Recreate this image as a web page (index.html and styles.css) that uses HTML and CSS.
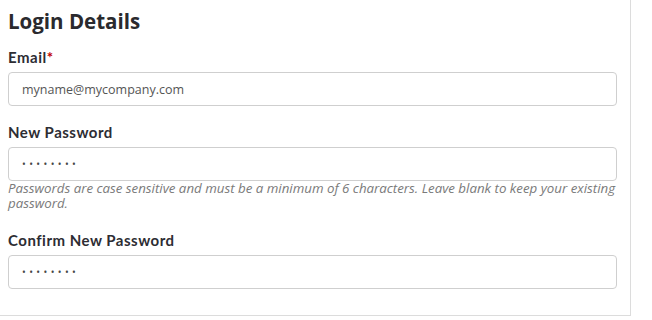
FILE: index.html
```html
<!DOCTYPE html>
<html>
<head>
<meta charset="utf-8">
<link rel="stylesheet" href="styles.css">
</head>
<body>
<div class="panel">
  <h2 class="title">Login Details</h2>
  <div class="field">
    <label class="label" for="email">Email<span class="req">*</span></label>
    <input class="input" id="email" type="text" value="myname@mycompany.com">
  </div>
  <div class="field">
    <label class="label" for="pw">New Password</label>
    <input class="input pw" id="pw" type="password" value="abcdefgh">
    <p class="help">Passwords are case sensitive and must be a minimum of 6 characters. Leave blank to keep your existing password.</p>
  </div>
  <div class="field">
    <label class="label" for="pw2">Confirm New Password</label>
    <input class="input pw" id="pw2" type="password" value="abcdefgh">
  </div>
</div>
</body>
</html>
```
FILE: styles.css
```css
html, body {
  margin: 0;
  padding: 0;
  background: #fff;
}
.panel {
  box-sizing: border-box;
  width: 631px;
  height: 316px;
  padding: 6px 13px 0 8px;
  border-right: 1px solid #dcdcdc;
  border-bottom: 1px solid #dcdcdc;
  display: flex;
  flex-direction: column;
}
.title {
  margin: 0 0 11px 0;
  font-family: "Open Sans", sans-serif;
  font-weight: 700;
  font-size: 20.5px;
  line-height: 30px;
  color: #2a2a2e;
}
.field {
  display: flex;
  flex-direction: column;
  margin-bottom: 16px;
}
.label {
  font-family: Lato, sans-serif;
  font-weight: 700;
  font-size: 15px;
  letter-spacing: 0.5px;
  line-height: 20px;
  color: #2d2d33;
  margin-bottom: 5px;
}
.req {
  color: #c00000;
}
.input {
  box-sizing: border-box;
  width: 609px;
  height: 34px;
  margin: 0;
  padding: 0 13px;
  border: 1px solid #cfcfcf;
  border-radius: 4px;
  font-family: "Open Sans", sans-serif;
  font-size: 12.5px;
  color: #555;
  background: #fff;
  outline: none;
}
.pw {
  font-size: 10px;
  letter-spacing: 3.4px;
  color: #444;
}
.help {
  margin: 0 0 3px 0;
  font-family: "Open Sans", sans-serif;
  font-style: italic;
  font-size: 13.3px;
  line-height: 15px;
  color: #7a7a7a;
}
```
